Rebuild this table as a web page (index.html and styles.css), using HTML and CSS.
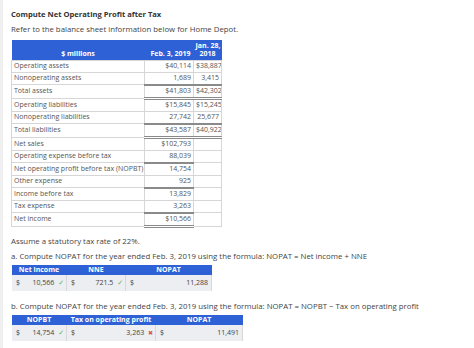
FILE: index.html
```html
<!DOCTYPE html>
<html>
<head>
<meta charset="utf-8">
<link rel="stylesheet" href="styles.css">
</head>
<body>
<div class="page">
  <h1 class="title">Compute Net Operating Profit after Tax</h1>
  <p class="intro">Refer to the balance sheet information below for Home Depot.</p>
  <table class="bs">
    <colgroup><col class="c-label"><col class="c-feb"><col class="c-jan"></colgroup>
    <thead>
      <tr>
        <th class="h-label">$ millions</th>
        <th class="h-num">Feb. 3, 2019</th>
        <th class="h-jan">Jan. 28,<br>2018</th>
      </tr>
    </thead>
    <tbody>
      <tr><td>Operating assets</td><td class="n">$40,114</td><td class="n">$38,887</td></tr>
      <tr><td>Nonoperating assets</td><td class="n sub">1,689</td><td class="n sub">3,415</td></tr>
      <tr><td>Total assets</td><td class="n tot">$41,803</td><td class="n tot">$42,302</td></tr>
      <tr><td>Operating liabilities</td><td class="n">$15,845</td><td class="n">$15,245</td></tr>
      <tr><td>Nonoperating liabilities</td><td class="n sub">27,742</td><td class="n sub">25,677</td></tr>
      <tr><td>Total liabilities</td><td class="n tot">$43,587</td><td class="n tot">$40,922</td></tr>
      <tr><td>Net sales</td><td class="n">$102,793</td><td></td></tr>
      <tr><td>Operating expense before tax</td><td class="n sub">88,039</td><td></td></tr>
      <tr><td>Net operating profit before tax (NOPBT)</td><td class="n">14,754</td><td></td></tr>
      <tr><td>Other expense</td><td class="n sub">925</td><td></td></tr>
      <tr><td>Income before tax</td><td class="n">13,829</td><td></td></tr>
      <tr><td>Tax expense</td><td class="n sub">3,263</td><td></td></tr>
      <tr><td>Net income</td><td class="n tot">$10,566</td><td></td></tr>
    </tbody>
  </table>

  <p class="line assume">Assume a statutory tax rate of 22%.</p>
  <p class="line aline">a. Compute NOPAT for the year ended Feb. 3, 2019 using the formula: NOPAT = Net income + NNE</p>
  <table class="calc calc-a">
    <colgroup><col class="k-cur"><col class="a1"><col class="k-cur"><col class="a2"><col class="k-cur"><col class="a3"></colgroup>
    <thead>
      <tr><th colspan="2">Net income</th><th colspan="2">NNE</th><th colspan="2">NOPAT</th></tr>
    </thead>
    <tbody>
      <tr>
        <td class="cur">$</td><td class="val">10,566 <span class="ok">✓</span></td>
        <td class="cur">$</td><td class="val">721.5 <span class="ok">✓</span></td>
        <td class="cur">$</td><td class="val last">11,288</td>
      </tr>
    </tbody>
  </table>

  <p class="line bline">b. Compute NOPAT for the year ended Feb. 3, 2019 using the formula: NOPAT = NOPBT − Tax on operating profit</p>
  <table class="calc calc-b">
    <colgroup><col class="k-cur"><col class="b1"><col class="k-cur"><col class="b2"><col class="k-cur"><col class="b3"></colgroup>
    <thead>
      <tr><th colspan="2">NOPBT</th><th colspan="2">Tax on operating profit</th><th colspan="2">NOPAT</th></tr>
    </thead>
    <tbody>
      <tr>
        <td class="cur">$</td><td class="val">14,754 <span class="ok">✓</span></td>
        <td class="cur">$</td><td class="val">3,263 <span class="bad">✖</span></td>
        <td class="cur">$</td><td class="val last">11,491</td>
      </tr>
    </tbody>
  </table>
</div>
</body>
</html>
```

FILE: styles.css
```css
html, body {
  margin: 0;
  padding: 0;
  background: #ffffff;
}
body {
  font-family: "Open Sans", "DejaVu Sans", sans-serif;
  color: #3a3a3a;
}
.page {
  background: #ffffff;
  height: 348px;
  padding: 8px 0 0 8px;
  box-sizing: border-box;
  border-left: 3px solid #efefef;
}
.title {
  font-size: 7.6px;
  font-weight: 700;
  margin: 0;
  line-height: 12px;
  color: #333;
}
.intro {
  font-size: 7.8px;
  margin: 3px 0 0 0;
  line-height: 12px;
  color: #444;
}
.bs {
  margin-top: 5px;
  border-collapse: collapse;
  font-size: 7px;
  color: #555;
  table-layout: fixed;
  width: 210px;
}
.c-label { width: 133px; }
.c-feb { width: 49px; }
.c-jan { width: 28px; }
.bs th {
  background: #2f61d6;
  color: #fff;
  font-weight: 700;
  padding: 0 2px 1px;
  line-height: 8.5px;
  vertical-align: bottom;
  height: 20px;
  box-sizing: border-box;
  white-space: nowrap;
}
.bs .h-label { text-align: center; }
.bs .h-num { text-align: right; padding-right: 3px; }
.bs .h-jan { text-align: center; }
.bs td {
  border: 1px solid #d6d6d6;
  height: 11px;
  padding: 0 2px;
  line-height: 10px;
  white-space: nowrap;
  overflow: hidden;
}
.bs td.n { text-align: right; }
.bs td.sub { border-bottom: 2px solid #8a8a8a; }
.bs td.tot { border-bottom: 3px double #8a8a8a; }

.line {
  font-size: 7.8px;
  margin: 0;
  line-height: 12px;
  color: #444;
}
.assume { margin-top: 7px; }
.aline { margin-top: 3px; }
.bline { margin-top: 9px; }

.calc {
  border-collapse: collapse;
  font-size: 7px;
  margin-top: 3px;
  table-layout: fixed;
}
.calc-a { width: 200px; }
.calc-b { width: 231px; }
.k-cur { width: 10px; }
.a1 { width: 45px; }
.a2 { width: 49px; }
.a3 { width: 76px; }
.b1 { width: 45px; }
.b2 { width: 79px; }
.b3 { width: 77px; }
.calc th {
  background: #2f61d6;
  color: #fff;
  font-weight: 700;
  height: 10px;
  padding: 0;
  line-height: 10px;
  text-align: center;
  white-space: nowrap;
}
.calc td {
  background: #eceef1;
  height: 16px;
  padding: 0 2px;
  line-height: 10px;
  color: #444;
  white-space: nowrap;
  overflow: hidden;
}
.calc td.cur {
  padding-left: 4px;
  padding-right: 0;
  border-left: 1px solid #ffffff;
}
.calc td.val { text-align: right; border-right: 1px solid #d8d8d8; }
.calc td.last { padding-right: 3px; }
.ok { color: #5cb85c; font-family: "DejaVu Sans", sans-serif; font-size: 7px; margin-left: 2px; }
.bad { color: #d9534f; font-family: "DejaVu Sans", sans-serif; font-size: 6px; margin-left: 2px; }
```
